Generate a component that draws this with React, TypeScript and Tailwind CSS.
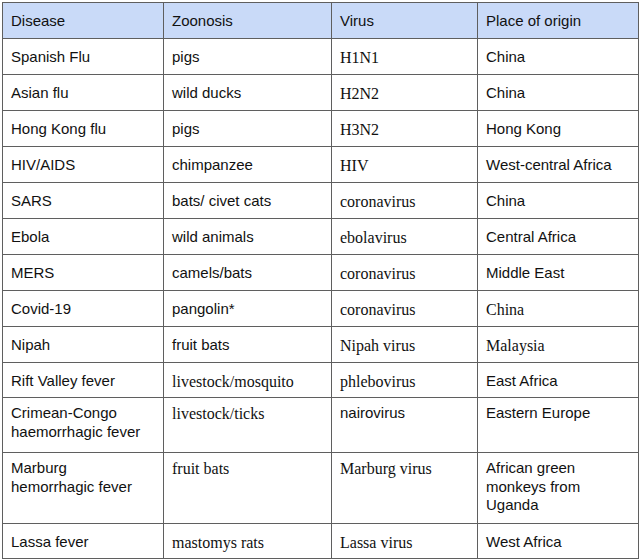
const SANS = "font-['Liberation_Sans',Arial,sans-serif] text-[15px]";
const SERIF = "font-['Liberation_Serif','Times_New_Roman',serif] text-[16px]";

type Cell = { text: string[]; serif?: boolean };
type Row = { cells: Cell[]; tall?: boolean; h: string };

const s = (...text: string[]): Cell => ({ text });
const t = (...text: string[]): Cell => ({ text, serif: true });

const ROWS: Row[] = [
  { h: "h-[36px]", cells: [s("Spanish Flu"), s("pigs"), t("H1N1"), s("China")] },
  { h: "h-[36px]", cells: [s("Asian flu"), s("wild ducks"), t("H2N2"), s("China")] },
  { h: "h-[36px]", cells: [s("Hong Kong flu"), s("pigs"), t("H3N2"), s("Hong Kong")] },
  { h: "h-[36px]", cells: [s("HIV/AIDS"), s("chimpanzee"), t("HIV"), s("West-central Africa")] },
  { h: "h-[36px]", cells: [s("SARS"), s("bats/ civet cats"), t("coronavirus"), s("China")] },
  { h: "h-[36px]", cells: [s("Ebola"), s("wild animals"), t("ebolavirus"), s("Central Africa")] },
  { h: "h-[36px]", cells: [s("MERS"), s("camels/bats"), t("coronavirus"), s("Middle East")] },
  { h: "h-[36px]", cells: [s("Covid-19"), s("pangolin*"), t("coronavirus"), t("China")] },
  { h: "h-[36px]", cells: [s("Nipah"), s("fruit bats"), t("Nipah virus"), t("Malaysia")] },
  { h: "h-[35px]", cells: [s("Rift Valley fever"), t("livestock/mosquito"), t("phlebovirus"), s("East Africa")] },
  {
    h: "h-[55px]",
    tall: true,
    cells: [s("Crimean-Congo", "haemorrhagic fever"), t("livestock/ticks"), s("nairovirus"), s("Eastern Europe")],
  },
  {
    h: "h-[71px]",
    tall: true,
    cells: [s("Marburg", "hemorrhagic fever"), t("fruit bats"), t("Marburg virus"), s("African green", "monkeys from", "Uganda")],
  },
  { h: "h-[35px]", cells: [s("Lassa fever"), t("mastomys rats"), t("Lassa virus"), s("West Africa")] },
];

const HEAD = ["Disease", "Zoonosis", "Virus", "Place of origin"];

function pad(tall?: boolean, serif?: boolean) {
  if (tall) return serif ? "pt-[7px] leading-[18.5px]" : "pt-[6px] leading-[18.5px]";
  return serif ? "pt-[10px] leading-[18px]" : "pt-[9px] leading-[18px]";
}

export default function App() {
  return (
    <div className="h-[559px] w-[640px] bg-white pl-[2px] pt-[2px] text-[#111]">
      <table className="w-[636px] table-fixed border-collapse">
        <colgroup>
          <col className="w-[161px]" />
          <col className="w-[168px]" />
          <col className="w-[146px]" />
          <col className="w-[161px]" />
        </colgroup>
        <thead>
          <tr className="h-[36px] bg-[#c9daf8]">
            {HEAD.map((h) => (
              <th
                key={h}
                className={`border border-[#5f5f5f] px-[8px] pt-[9px] text-left align-top font-normal leading-[18px] ${SANS}`}
              >
                {h}
              </th>
            ))}
          </tr>
        </thead>
        <tbody>
          {ROWS.map((r, i) => (
            <tr key={i} className={r.h}>
              {r.cells.map((c, j) => (
                <td
                  key={j}
                  className={`border border-[#5f5f5f] px-[8px] align-top ${pad(r.tall, c.serif)} ${
                    c.serif ? SERIF : SANS
                  }`}
                >
                  {c.text.map((line, k) => (
                    <div key={k}>{line}</div>
                  ))}
                </td>
              ))}
            </tr>
          ))}
        </tbody>
      </table>
    </div>
  );
}
